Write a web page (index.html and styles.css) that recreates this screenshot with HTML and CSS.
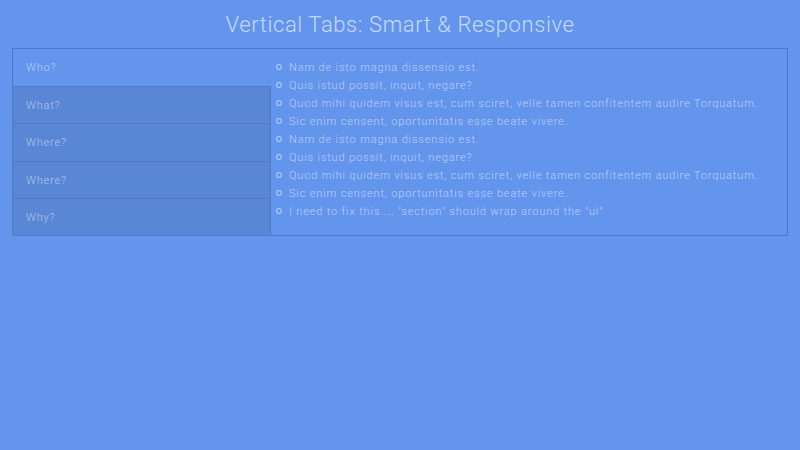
FILE: index.html
```html
<!DOCTYPE html>
<html lang="en">
<head>
    <meta charset="UTF-8">
    <meta name="viewport" content="width=device-width, initial-scale=1.0">
    <title>Vertical Tabs</title>
    <link rel="stylesheet" href="styles.css">
</head>
<body>
    <h1>Vertical Tabs: Smart &amp; Responsive</h1>
    <div class="tabs">
        <div class="tab-list">
            <div class="tab active">Who?</div>
            <div class="tab">What?</div>
            <div class="tab">Where?</div>
            <div class="tab">Where?</div>
            <div class="tab">Why?</div>
        </div>
        <section class="tab-content">
            <ul>
                <li>Nam de isto magna dissensio est.</li>
                <li>Quis istud possit, inquit, negare?</li>
                <li>Quod mihi quidem visus est, cum sciret, velle tamen confitentem audire Torquatum.</li>
                <li>Sic enim censent, oportunitatis esse beate vivere.</li>
                <li>Nam de isto magna dissensio est.</li>
                <li>Quis istud possit, inquit, negare?</li>
                <li>Quod mihi quidem visus est, cum sciret, velle tamen confitentem audire Torquatum.</li>
                <li>Sic enim censent, oportunitatis esse beate vivere.</li>
                <li>I need to fix this.... "section" should wrap around the "ul"</li>
            </ul>
        </section>
    </div>
</body>
</html>
```

FILE: styles.css
```css
body {
    margin: 0;
    padding: 0 12px;
    background-color: #6495ed;
    font-family: Roboto, "Liberation Sans", sans-serif;
    font-weight: 300;
    color: rgba(255, 255, 255, 0.55);
}
h1 {
    margin: 0;
    padding: 11px 0 10px;
    text-align: center;
    font-size: 22px;
    font-weight: 300;
    letter-spacing: 0.6px;
    line-height: 27px;
    color: rgba(255, 255, 255, 0.65);
}
.tabs {
    display: flex;
    align-items: flex-start;
    border: 1px solid #5079cc;
}
.tab-list {
    width: 257px;
    flex-shrink: 0;
    border-right: 1px solid #5079cc;
}
.tab {
    box-sizing: border-box;
    height: 37.2px;
    line-height: 37px;
    padding: 0 13px;
    font-size: 11px;
    letter-spacing: 0.8px;
    background-color: #5a86d6;
    border-top: 1px solid #5079cc;
}
.tab:first-child {
    border-top: none;
}
.tab.active {
    background-color: #6495ed;
    border-right: 1px solid #6495ed;
    margin-right: -1px;
}
.tab-content ul {
    margin: 0;
    padding: 10px 0 0 5px;
    list-style: none;
    font-size: 11px;
    letter-spacing: 0.85px;
    line-height: 18px;
}
.tab-content li::before {
    content: "";
    display: inline-block;
    box-sizing: border-box;
    width: 6px;
    height: 6px;
    margin-right: 7px;
    border: 1.2px solid rgba(255, 255, 255, 0.6);
    border-radius: 50%;
    vertical-align: 1px;
}
```
